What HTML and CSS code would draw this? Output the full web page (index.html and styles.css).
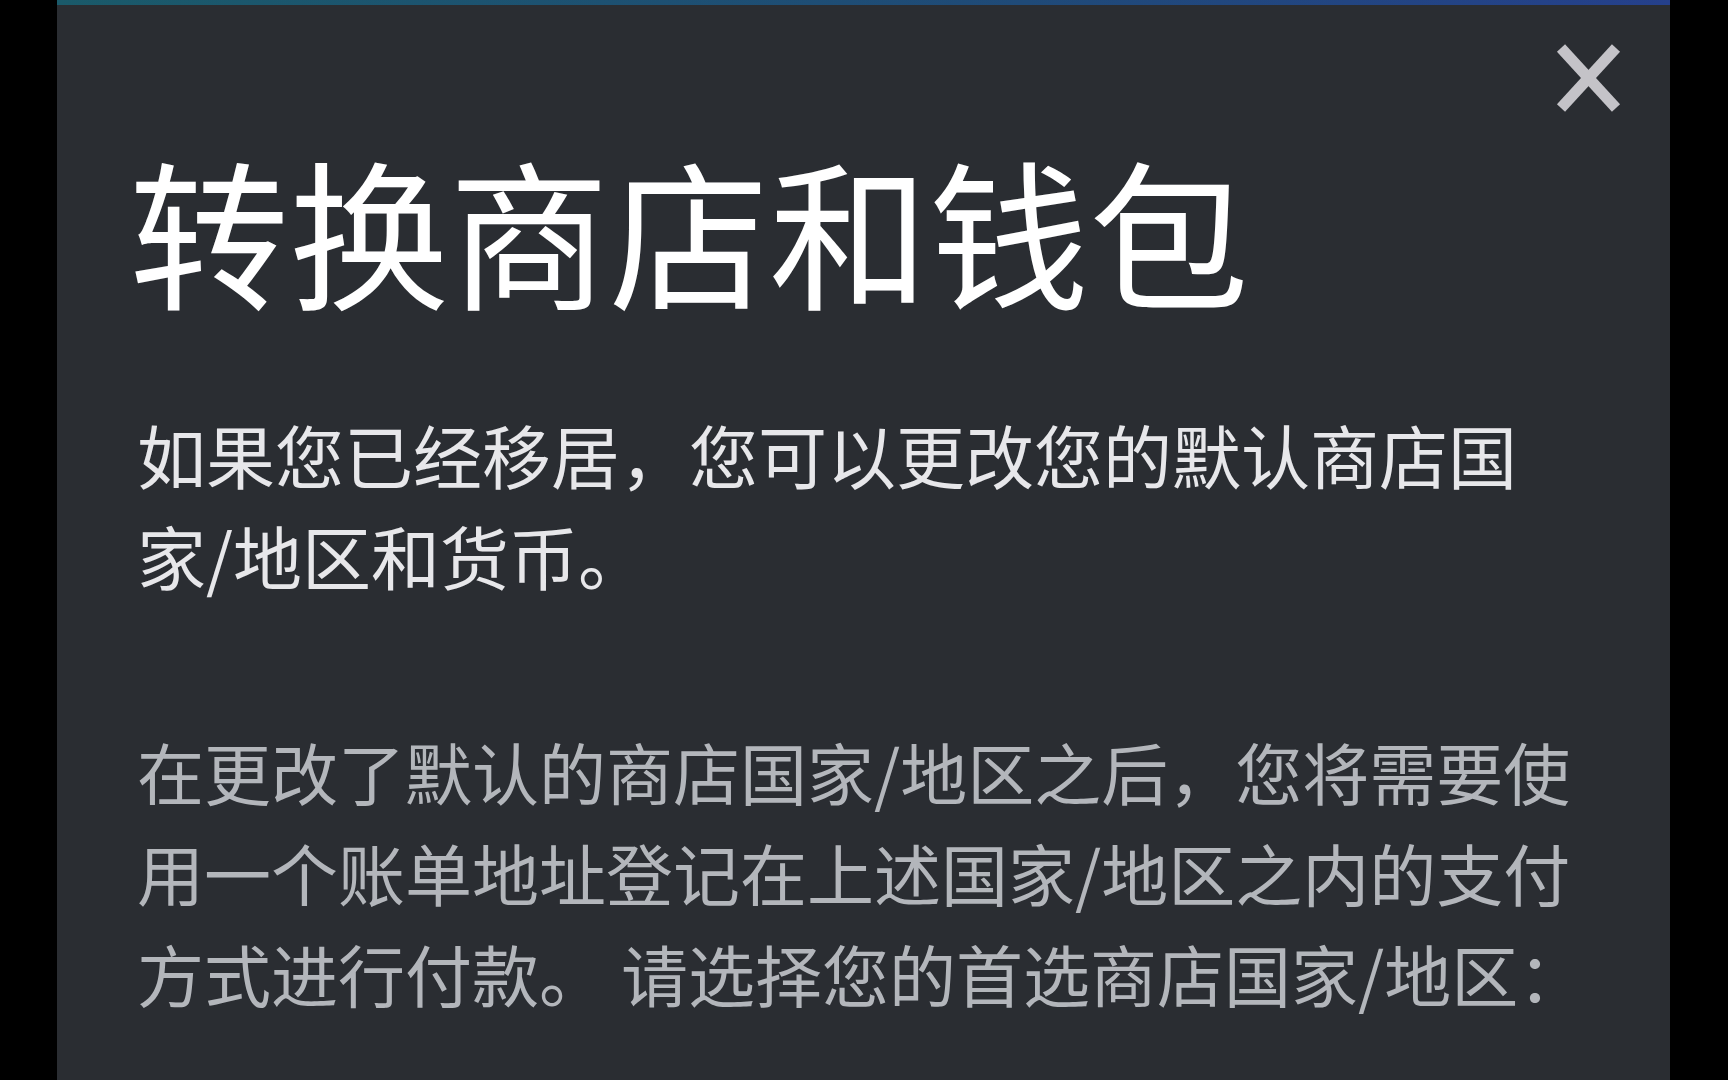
FILE: index.html
```html
<!DOCTYPE html>
<html lang="zh-CN">
<head>
  <meta charset="UTF-8">
  <title>转换商店和钱包</title>
  <link rel="stylesheet" href="styles.css">
</head>
<body>
  <div class="dialog">
    <button class="close" aria-label="关闭">
      <svg width="67" height="70" viewBox="0 0 67 70">
        <line x1="6" y1="5" x2="61" y2="65" />
        <line x1="61" y1="5" x2="6" y2="65" />
      </svg>
    </button>
    <h1 class="title">转换商店和钱包</h1>
    <p class="lead">如果您已经移居，您可以更改您的默认商店国家/地区和货币。</p>
    <p class="note">在更改了默认的商店国家/地区之后，您将需要使用一个账单地址登记在上述国家/地区之内的支付方式进行付款。 请选择您的首选商店国家/地区：</p>
  </div>
</body>
</html>
```

FILE: styles.css
```css
html, body { margin: 0; height: 100%; background: #000; }
body { font-family: "Noto Sans CJK SC", "Noto Sans", sans-serif; overflow: hidden; }
.dialog { position: relative; margin-left: 57px; width: 1613px; height: 100%; box-sizing: border-box; padding: 128px 0 0 80px; background: #2a2d32; border-top: 5px solid #1e566a; border-image: linear-gradient(90deg, #1a5a6a, #1f4a78 60%, #25408c) 1; }
.close { position: absolute; top: 38px; right: 48px; padding: 0; border: 0; background: none; cursor: pointer; }
.close svg { display: block; }
.close line { stroke: #c4c3c8; stroke-width: 11; }
.title { margin: 0 0 0 -8px; font-size: 160px; line-height: 190px; font-weight: 400; color: #fff; }
.lead { margin: 81px 0 0; width: 1445px; font-size: 69px; line-height: 101px; color: #e7e7ea; }
.note { margin: 114px 0 0; width: 1480px; font-size: 67px; line-height: 101px; color: #b3b6bb; }
```
